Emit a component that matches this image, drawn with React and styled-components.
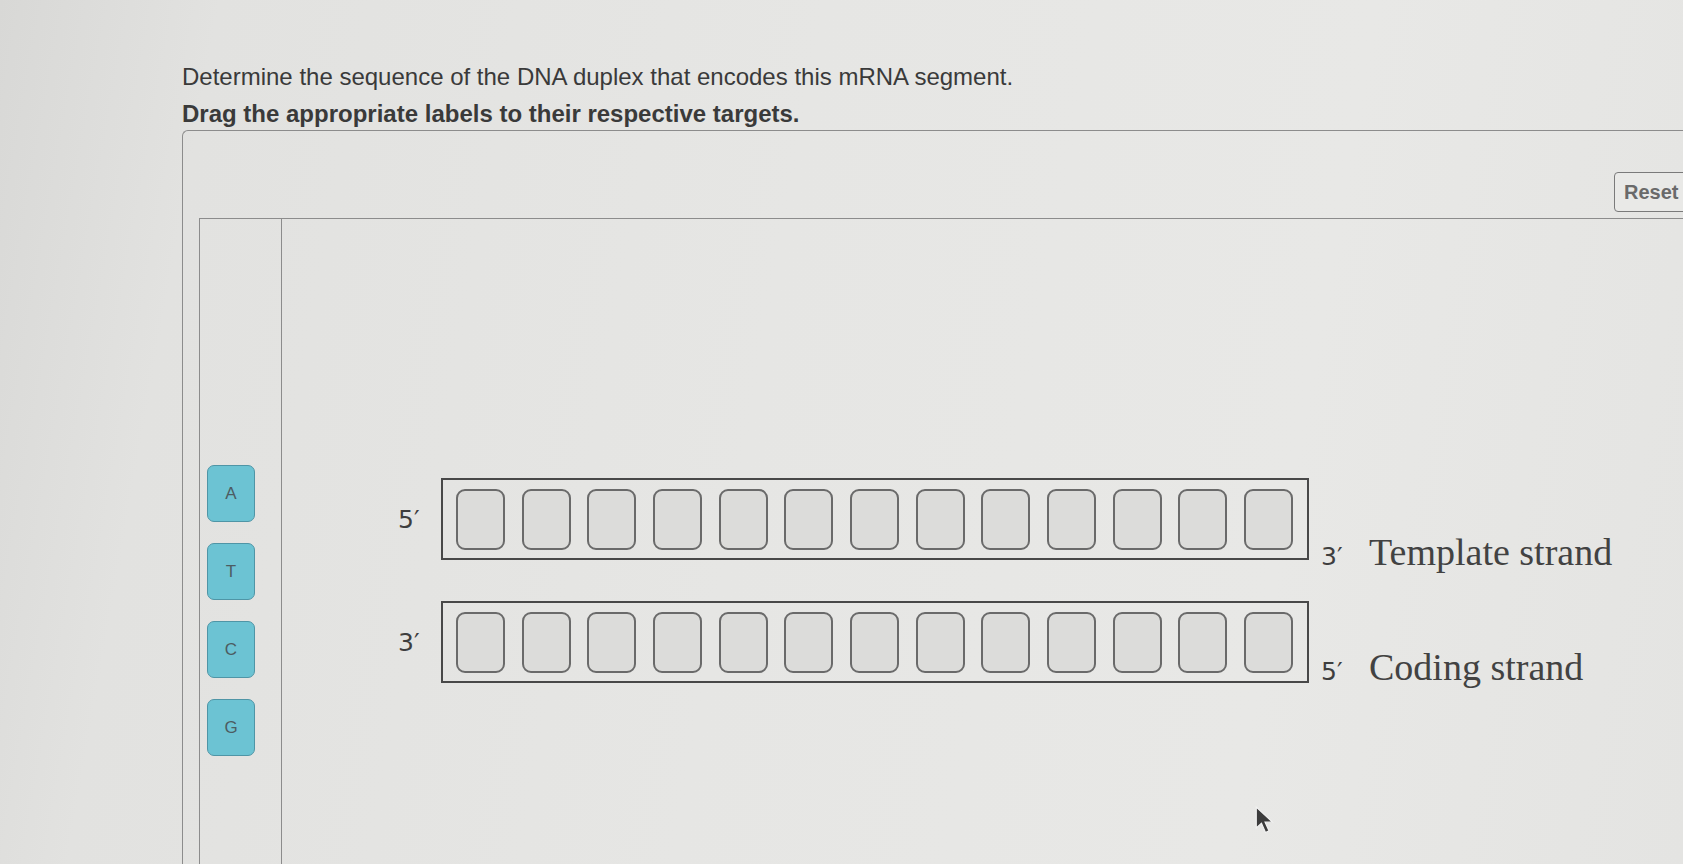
import React from "react";
import styled, { createGlobalStyle } from "styled-components";

const Global = createGlobalStyle`
  html, body { margin: 0; padding: 0; }
  body {
    width: 1683px;
    height: 864px;
    overflow: hidden;
    background: linear-gradient(100deg, #d8d8d6 0%, #e2e2e0 12%, #e6e6e4 45%, #e8e8e6 75%, #e4e4e2 100%);
    font-family: "Liberation Sans", Arial, sans-serif;
    color: #3b3b3b;
  }
`;

const Page = styled.div`
  position: relative;
  padding: 63px 0 0 182px;
  height: 864px;
  box-sizing: border-box;
`;

const Title = styled.p`
  margin: 0;
  font-size: 24px;
  line-height: 27px;
  color: #3a3a3a;
`;

const Instruction = styled.p`
  margin: 10px 0 0;
  font-size: 24px;
  line-height: 27px;
  font-weight: 700;
  color: #3a3a3a;
`;

const OuterBox = styled.div`
  margin-top: 3px;
  width: 1530px;
  height: 760px;
  border: 1.5px solid #8c8c8c;
  border-right: none;
  border-bottom: none;
  border-radius: 6px 0 0 0;
  display: flex;
  flex-direction: column;
`;

const Toolbar = styled.div`
  display: flex;
  justify-content: flex-end;
  padding: 41px 17px 6px 0;
`;

const ResetButton = styled.button`
  width: 82px;
  height: 40px;
  border: 1.5px solid #7a7a7a;
  border-radius: 4px;
  background: #e9e9e7;
  color: #6a6a6a;
  font-family: "Liberation Sans", Arial, sans-serif;
  font-weight: 700;
  font-size: 20px;
  text-align: left;
  padding: 0 9px;
`;

const InnerPanel = styled.div`
  margin-left: 16px;
  flex: 1;
  display: flex;
  border-top: 1.5px solid #8c8c8c;
  border-left: 1.5px solid #8c8c8c;
`;

const Sidebar = styled.div`
  width: 82px;
  border-right: 1.5px solid #8c8c8c;
  display: flex;
  flex-direction: column;
  gap: 21px;
  padding: 246px 0 0 7px;
  box-sizing: border-box;
`;

const Tile = styled.div`
  width: 48px;
  height: 57px;
  box-sizing: border-box;
  border: 1.5px solid #4f95a6;
  border-radius: 7px;
  background: #6cc3d3;
  display: flex;
  align-items: center;
  justify-content: center;
  font-size: 17px;
  color: #4c5c62;
`;

const Content = styled.div`
  flex: 1;
  padding: 259px 0 0 116px;
  display: flex;
  flex-direction: column;
  gap: 41px;
`;

const StrandRow = styled.div`
  display: flex;
  align-items: center;
`;

const EndLabel = styled.span`
  font-family: "DejaVu Sans", "Liberation Sans", sans-serif;
  font-size: 25px;
  color: #3e3e3e;
  width: ${(p) => p.$w}px;
`;

const StrandBox = styled.div`
  width: 868px;
  height: 82px;
  box-sizing: border-box;
  border: 2px solid #484848;
  display: flex;
  align-items: center;
  justify-content: space-between;
  padding: 0 14px 0 13px;
`;

const Cell = styled.div`
  width: 49px;
  height: 61px;
  box-sizing: border-box;
  border: 2px solid #6a6a6a;
  border-radius: 9px;
  background: #dcdcda;
`;

const RightLabel = styled.div`
  align-self: flex-end;
  display: flex;
  align-items: baseline;
  margin: 0 0 ${(p) => p.$drop}px 12px;
`;

const StrandName = styled.span`
  font-family: "Liberation Serif", "Times New Roman", serif;
  font-size: 38px;
  color: #424242;
  margin-left: 20px;
`;

const Cursor = styled.svg`
  position: absolute;
  left: 1255px;
  top: 806px;
`;

const bases = ["A", "T", "C", "G"];
const cells = Array.from({ length: 13 }, (_, i) => i);

const rows = [
  { left: "5′", right: "3′", name: "Template strand", drop: -14 },
  { left: "3′", right: "5′", name: "Coding strand", drop: -6 },
];

export default function App() {
  return (
    <>
      <Global />
      <Page>
        <Title>Determine the sequence of the DNA duplex that encodes this mRNA segment.</Title>
        <Instruction>Drag the appropriate labels to their respective targets.</Instruction>
        <OuterBox>
          <Toolbar>
            <ResetButton>Reset</ResetButton>
          </Toolbar>
          <InnerPanel>
            <Sidebar>
              {bases.map((b) => (
                <Tile key={b}>{b}</Tile>
              ))}
            </Sidebar>
            <Content>
              {rows.map((r) => (
                <StrandRow key={r.name}>
                  <EndLabel $w={43}>{r.left}</EndLabel>
                  <StrandBox>
                    {cells.map((c) => (
                      <Cell key={c} />
                    ))}
                  </StrandBox>
                  <RightLabel $drop={r.drop}>
                    <EndLabel $w={28}>{r.right}</EndLabel>
                    <StrandName>{r.name}</StrandName>
                  </RightLabel>
                </StrandRow>
              ))}
            </Content>
          </InnerPanel>
        </OuterBox>
        <Cursor width="21" height="30" viewBox="0 0 18 26">
          <path d="M1 1 L1 19 L5.5 15 L9 23 L12 21.5 L8.6 14 L15 14 Z" fill="#3c3c3c" stroke="#f2f2f2" strokeWidth="1" />
        </Cursor>
      </Page>
    </>
  );
}
